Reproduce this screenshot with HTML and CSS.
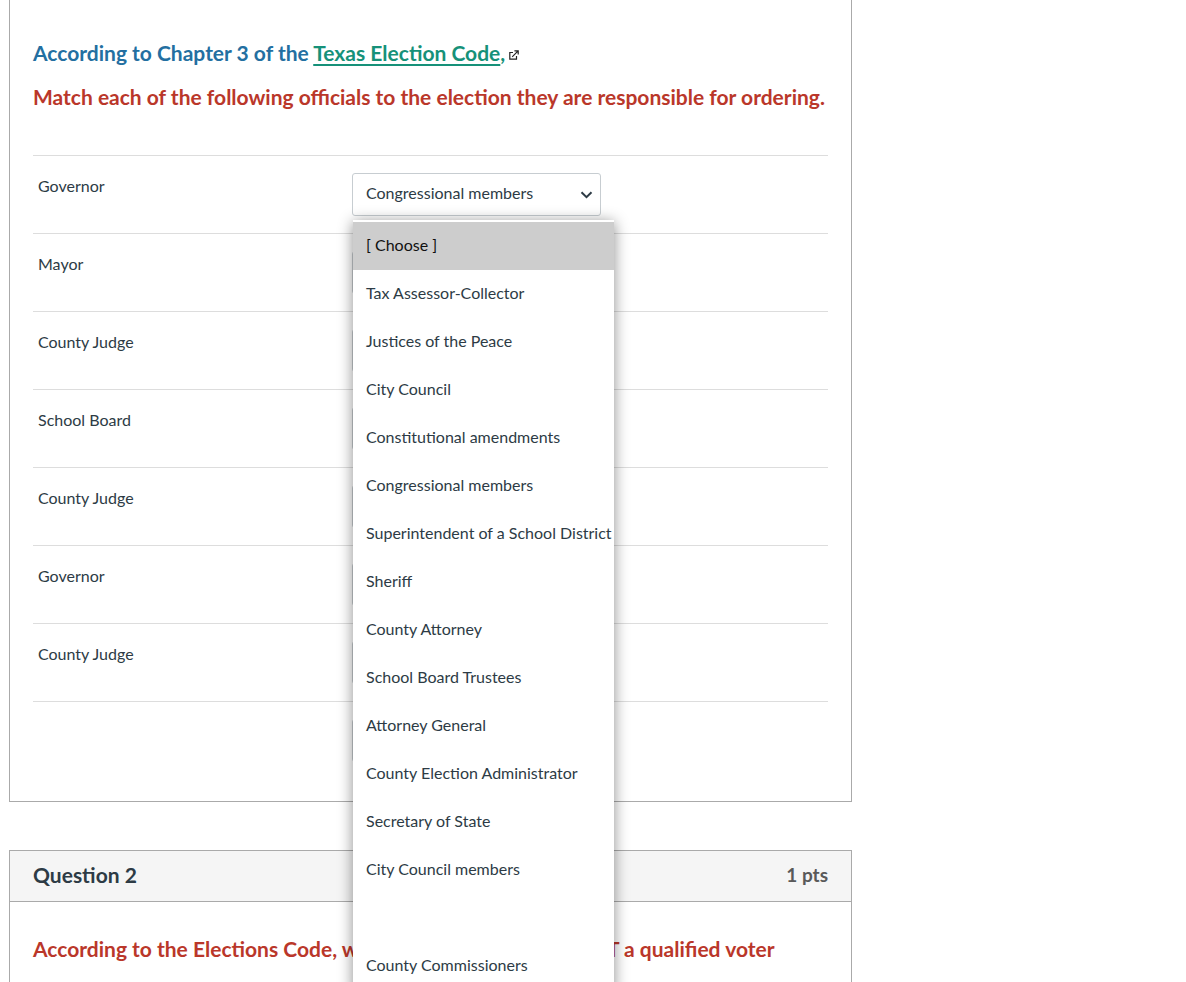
FILE: index.html
```
<!DOCTYPE html>
<html lang="en">
<head>
<meta charset="utf-8">
<title>Quiz</title>
<link rel="stylesheet" href="styles.css">
</head>
<body>
<main class="page">
  <section class="question question-open">
    <h2 class="prompt prompt-intro">According to Chapter 3 of the <a class="code-link" href="#">Texas Election Code</a><span class="comma">,</span><svg class="external" viewBox="0 0 10 10" aria-hidden="true"><path d="M4 2.5H.8v6.7h6.7V6M3.2 6.8l5.4-5.4M5.4.8h3.8v3.8"/></svg></h2>
    <h2 class="prompt">Match each of the following officials to the election they are responsible for ordering.</h2>
    <div class="answers">
      <div class="answer">
        <label for="a1">Governor</label>
        <div class="picker">
          <select id="a1"><option>Congressional members</option></select>
          <svg class="chevron" viewBox="0 0 12 8" aria-hidden="true"><path d="M1 1.2l5 5 5-5"/></svg>
          <ul class="menu" role="listbox" aria-label="Governor choices">
            <li class="active" role="option" aria-selected="true">[ Choose ]</li>
            <li role="option">Tax Assessor-Collector</li>
            <li role="option">Justices of the Peace</li>
            <li role="option">City Council</li>
            <li role="option">Constitutional amendments</li>
            <li role="option">Congressional members</li>
            <li role="option">Superintendent of a School District</li>
            <li role="option">Sheriff</li>
            <li role="option">County Attorney</li>
            <li role="option">School Board Trustees</li>
            <li role="option">Attorney General</li>
            <li role="option">County Election Administrator</li>
            <li role="option">Secretary of State</li>
            <li role="option">City Council members</li>
            <li role="option"></li>
            <li role="option">County Commissioners</li>
          </ul>
        </div>
      </div>
      <div class="answer"><label for="a2">Mayor</label><div class="picker"><select id="a2"></select></div></div>
      <div class="answer"><label for="a3">County Judge</label><div class="picker"><select id="a3"></select></div></div>
      <div class="answer"><label for="a4">School Board</label><div class="picker"><select id="a4"></select></div></div>
      <div class="answer"><label for="a5">County Judge</label><div class="picker"><select id="a5"></select></div></div>
      <div class="answer"><label for="a6">Governor</label><div class="picker"><select id="a6"></select></div></div>
      <div class="answer"><label for="a7">County Judge</label><div class="picker"><select id="a7"></select></div></div>
      <div class="answer"><label for="a8"></label><div class="picker"><select id="a8"></select></div></div>
    </div>
  </section>
  <section class="question">
    <header class="question-header">
      <h1 class="question-name">Question 2</h1>
      <span class="points">1 pts</span>
    </header>
    <div class="question-body">
      <h2 class="prompt">According to the Elections Code, which of the following is NOT a qualified voter</h2>
    </div>
  </section>
</main>
</body>
</html>
```
FILE: styles.css
```
* { box-sizing: border-box; }
body {
  margin: 0;
  background: #fff;
  color: #2d3b45;
  font-family: Lato, "Liberation Sans", sans-serif;
  font-size: 16px;
  line-height: 24px;
}
.page {
  height: 100vh;
  overflow: hidden;
  padding: 0 334px 0 9px;
}
.question { border: 1px solid #aaa; }
.question-open {
  border-top: 0;
  padding: 37px 23px 22px;
  margin-bottom: 48px;
}
.prompt {
  margin: 0;
  color: #ba372a;
  font-size: 21px;
  font-weight: 700;
  line-height: 32px;
  white-space: nowrap;
}
.prompt-intro {
  color: #236fa1;
  margin-bottom: 12px;
}
.code-link {
  color: #169179;
  text-decoration: underline;
  text-decoration-thickness: 2px;
  text-underline-offset: 3px;
  text-decoration-skip-ink: none;
}
.comma { color: #169179; }
.external {
  width: 10px;
  height: 10px;
  margin-left: 4px;
  vertical-align: 1px;
  fill: none;
  stroke: #222;
  stroke-width: 1.2;
}
.answers { margin-top: 42px; }
.answer {
  display: grid;
  grid-template-columns: 314px 1fr;
  height: 78px;
  padding: 17px 5px 0;
  border-top: 1px solid #ddd;
}
.answer label { padding-top: 1px; }
.picker {
  position: relative;
  width: 249px;
}
select {
  appearance: none;
  display: block;
  width: 100%;
  height: 43px;
  padding: 0 13px 3px;
  border: 1px solid #c7cdd1;
  border-radius: 3px;
  background: #fff;
  color: #2d3b45;
  font: inherit;
}
.chevron {
  position: absolute;
  right: 8px;
  top: 18px;
  width: 13px;
  height: 8px;
  fill: none;
  stroke: #2d3b45;
  stroke-width: 2;
}
.menu {
  position: absolute;
  z-index: 2;
  top: 47px;
  left: 1px;
  width: 261px;
  margin: 0;
  padding: 2px 0;
  background: #fff;
  box-shadow: 0 2px 14px rgba(0, 0, 0, .45);
  list-style: none;
}
.menu li {
  height: 48px;
  padding-left: 13px;
  line-height: 46px;
  white-space: nowrap;
}
.menu .active {
  background: #cdcdcd;
  color: #111;
}
.question-header {
  display: flex;
  justify-content: space-between;
  align-items: center;
  height: 51px;
  padding: 0 23px 3px;
  background: #f5f5f5;
  border-bottom: 1px solid #aaa;
}
.question-name {
  margin: 0;
  font-size: 21px;
  font-weight: 700;
}
.points {
  color: #595959;
  font-size: 19px;
  font-weight: 700;
}
.question-body { padding: 31px 23px; }
```
